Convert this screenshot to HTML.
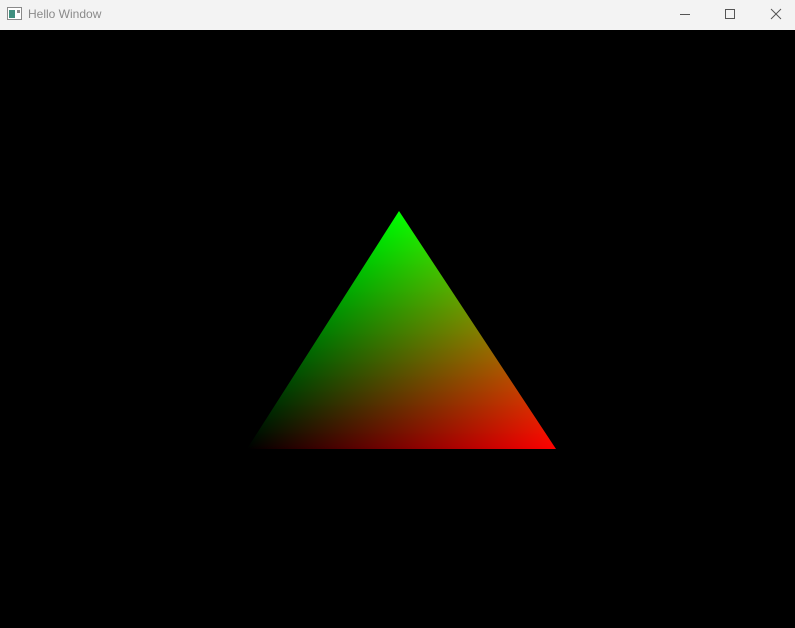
<!DOCTYPE html>
<html><head><meta charset="utf-8"><style>
html,body{margin:0;padding:0;width:795px;height:628px;overflow:hidden;background:#000;}
.tb{position:absolute;left:0;top:0;width:795px;height:30px;background:#f3f3f3;}
.title{position:absolute;left:28px;top:7px;font:12px "Liberation Sans",sans-serif;color:#8a8a8a;}
svg{position:absolute;}
</style></head><body>
<div class="tb">
<svg style="left:7px;top:7px" width="16" height="14" viewBox="0 0 16 14">
<rect x="0.5" y="0.5" width="14" height="12" fill="#fff" stroke="#8a8a8a"/>
<rect x="2" y="3" width="6" height="8" fill="#3f8f7f"/>
<rect x="10" y="3" width="3" height="3" fill="#888"/>
</svg>
<div class="title">Hello Window</div>
<svg style="left:660px;top:0" width="135" height="30">
<line x1="20" y1="14.5" x2="30" y2="14.5" stroke="#555" stroke-width="1"/>
<rect x="65.5" y="9.5" width="9" height="9" fill="none" stroke="#555"/>
<line x1="111" y1="9" x2="121" y2="19" stroke="#555"/>
<line x1="121" y1="9" x2="111" y2="19" stroke="#555"/>
</svg>
</div>
<svg style="left:0;top:0" width="795" height="628">
<defs>
<linearGradient id="g" gradientUnits="userSpaceOnUse" x1="399" y1="211" x2="399" y2="449">
<stop offset="0" stop-color="#00ff00"/><stop offset="1" stop-color="#000"/></linearGradient>
<linearGradient id="r" gradientUnits="userSpaceOnUse" x1="556" y1="449" x2="336" y2="310">
<stop offset="0" stop-color="#ff0000"/><stop offset="1" stop-color="#000"/></linearGradient>
</defs>
<polygon points="399,211 247,449 556,449" fill="url(#g)"/>
<polygon points="399,211 247,449 556,449" fill="url(#r)" style="mix-blend-mode:plus-lighter"/>
</svg>
</body></html>
